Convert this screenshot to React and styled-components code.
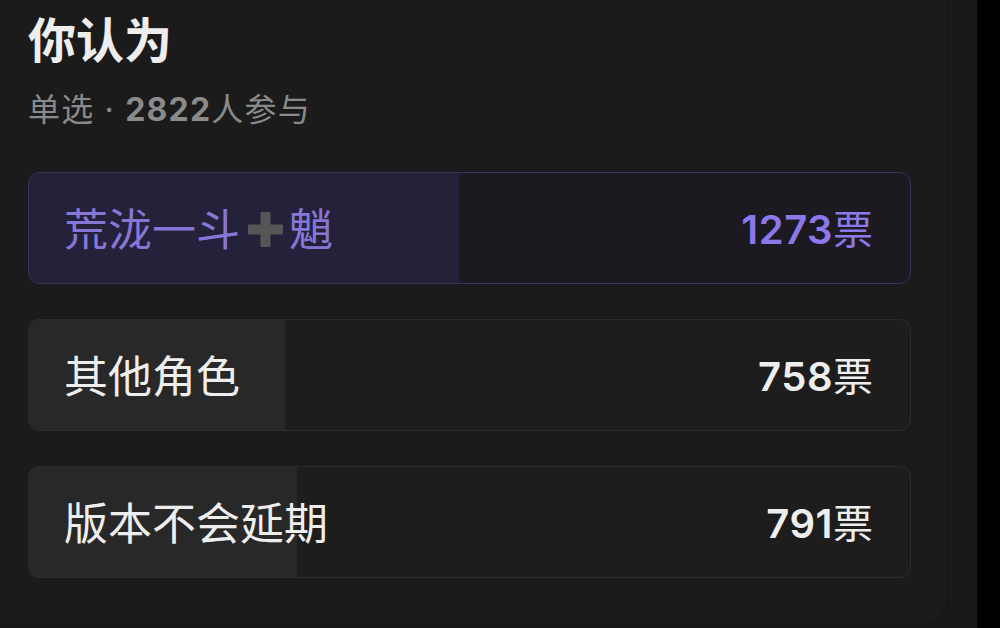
import React from "react";
import styled, { createGlobalStyle } from "styled-components";

const options = [
  { id: 1, label: "荒泷一斗", partner: "魈", votes: 1273, fill: 48.8, picked: true },
  { id: 2, label: "其他角色", votes: 758, fill: 29.1 },
  { id: 3, label: "版本不会延期", votes: 791, fill: 30.4 },
];

const GlobalStyle = createGlobalStyle`
  html, body {
    margin: 0;
    padding: 0;
    background: #000;
  }
  body {
    font-family: "Inter", "Noto Sans CJK SC", sans-serif;
  }
`;

const Plus = () => (
  <PlusIcon viewBox="0 0 35 35" aria-hidden="true">
    <rect x="12.5" y="0" width="10" height="35" rx="1.5" fill="#565656" />
    <rect x="0" y="12.5" width="35" height="10" rx="1.5" fill="#565656" />
  </PlusIcon>
);

const App = () => {
  return (
    <>
      <GlobalStyle />
      <Screen>
        <Panel>
          <Card>
            <Title>你认为</Title>
            <Meta>
              单选 · <strong>2822</strong>人参与
            </Meta>
            <OptionList>
              {options.map((opt) => (
                <Option key={opt.id} $picked={opt.picked} $fill={opt.fill}>
                  <Label $picked={opt.picked}>
                    {opt.label}
                    {opt.partner && (
                      <>
                        <Plus />
                        {opt.partner}
                      </>
                    )}
                  </Label>
                  <Votes $picked={opt.picked}>
                    <b>{opt.votes}</b>票
                  </Votes>
                </Option>
              ))}
            </OptionList>
          </Card>
        </Panel>
        <Gutter />
      </Screen>
    </>
  );
};

const Screen = styled.div`
  display: flex;
  width: 1000px;
  height: 628px;
  overflow: hidden;
  background: #000;
`;

const Panel = styled.div`
  width: 977px;
  height: 628px;
  background: #181818;
  display: flex;
  flex-direction: column;
`;

const Gutter = styled.div`
  flex: 1;
  background: #000;
`;

const Card = styled.section`
  box-sizing: border-box;
  width: 965px;
  height: 623px;
  margin-left: -18px;
  padding: 12px 36px 0 46px;
  background: #1b1b1b;
  border-radius: 0 0 24px 24px;
  box-shadow: 3px 0 0 #171717, 5px 0 0 #1a1a1a;
  display: flex;
  flex-direction: column;
`;

const Title = styled.h1`
  margin: 0;
  font-size: 48px;
  line-height: 58px;
  font-weight: 700;
  color: #eeeeee;
`;

const Meta = styled.div`
  margin-top: 20px;
  font-size: 32px;
  line-height: 40px;
  letter-spacing: 1.2px;
  color: #8a8a8a;

  strong {
    font-weight: 700;
  }
`;

const OptionList = styled.div`
  margin-top: 42px;
  display: flex;
  flex-direction: column;
  gap: 35px;
`;

const Option = styled.div`
  box-sizing: border-box;
  height: 112px;
  display: flex;
  align-items: center;
  justify-content: space-between;
  padding: 3px 37px 0 35px;
  border-radius: 11px;
  border: 1.5px solid ${(p) => (p.$picked ? "#39335a" : "#2c2c2c")};
  background: ${(p) =>
    p.$picked
      ? `linear-gradient(to right, #25213a ${p.$fill}%, #1c1a20 ${p.$fill}%)`
      : `linear-gradient(to right, #282828 ${p.$fill}%, #1d1d1d ${p.$fill}%)`};
`;

const Label = styled.div`
  display: flex;
  align-items: center;
  font-size: 44px;
  line-height: 1;
  color: ${(p) => (p.$picked ? "#8676d6" : "#eeeeee")};
`;

const PlusIcon = styled.svg`
  width: 35px;
  height: 35px;
  margin: 0 6px 0 8px;
  flex-shrink: 0;
`;

const Votes = styled.div`
  font-size: 40px;
  line-height: 1;
  color: ${(p) => (p.$picked ? "#8b78ea" : "#eeeeee")};

  b {
    font-weight: 600;
    letter-spacing: 0.5px;
  }
`;

export default App;
